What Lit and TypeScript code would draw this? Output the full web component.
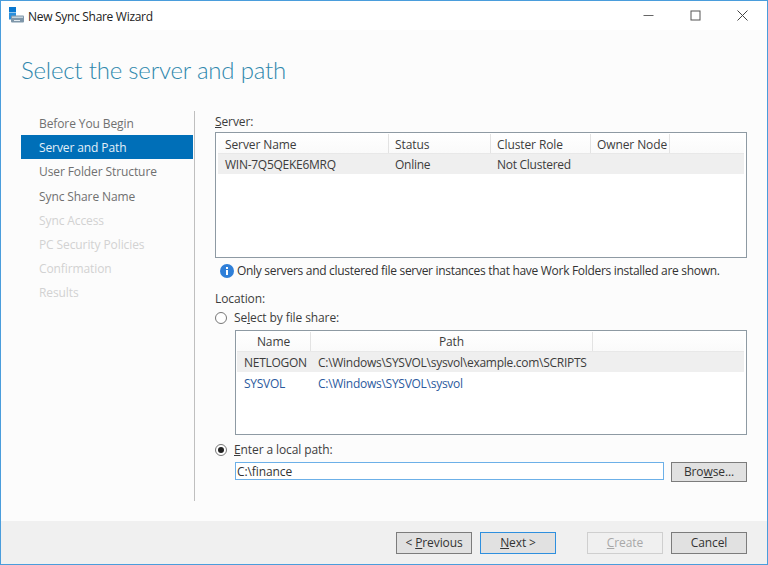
import { LitElement, html, css } from 'lit';
import { customElement } from 'lit/decorators.js';

const NAV = [
  { label: 'Before You Begin', cls: '' },
  { label: 'Server and Path', cls: 'active' },
  { label: 'User Folder Structure', cls: '' },
  { label: 'Sync Share Name', cls: '' },
  { label: 'Sync Access', cls: 'off' },
  { label: 'PC Security Policies', cls: 'off' },
  { label: 'Confirmation', cls: 'off' },
  { label: 'Results', cls: 'off' },
];

@customElement('app-root')
export class AppRoot extends LitElement {
  static styles = css`
    :host {
      display: block;
      width: 768px;
      height: 565px;
      font-family: 'Open Sans', 'Noto Sans', sans-serif;
      font-size: 12px;
      color: #3c3c3c;
      letter-spacing: -0.1px;
    }
    u { text-underline-offset: 1px; }
    .win {
      box-sizing: border-box;
      height: 565px;
      display: flex;
      flex-direction: column;
      border: 1px solid #4a9ddc;
      background: #fcfcfc;
    }
    .title {
      height: 29px;
      flex: none;
      display: flex;
      align-items: center;
      background: #fff;
      color: #222;
      letter-spacing: -0.3px;
    }
    .logo { margin-left: 7px; width: 17px; height: 17px; }
    .title span { margin-left: 3px; flex: 1; padding-top: 1px; }
    .ctl { width: 47px; height: 29px; display: flex; align-items: center; justify-content: center; }
    .ctl svg { width: 11px; height: 11px; }
    .ctl.last { margin-right: 1px; }
    h1 {
      margin: 22px 0 0 20px;
      height: 36px;
      font-family: 'Lato', 'Open Sans', sans-serif;
      font-size: 24px;
      line-height: 36px;
      font-weight: 300;
      letter-spacing: -0.2px;
      color: #2f88ad;
    }
    .main { flex: 1; display: flex; margin-top: 23px; }
    nav { width: 172px; margin-left: 20px; flex: none; height: 390px; }
    nav div { box-sizing: border-box; height: 24.2px; line-height: 24px; padding: 1px 0 0 18px; color: #707070; }
    nav .active { background: #006fb8; color: #e4f0f8; }
    nav .off { color: #d2d2d2; }
    .rule { width: 1px; height: 390px; margin-left: 1px; background: #bfbfbf; flex: none; }
    .content { margin-left: 20px; width: 532px; }
    .lbl { height: 17px; line-height: 17px; margin-top: 2px; }
    .list {
      box-sizing: border-box;
      border: 1px solid #8e9aa3;
      background: #fff;
      padding: 1px 2px;
    }
    .srv { height: 126px; margin-top: 2px; }
    .srv .head { line-height: 21px; }
    .shr { height: 105px; margin: 4px 0 0 20px; padding-left: 1px; }
    .head {
      display: flex;
      height: 19px;
      line-height: 19px;
      border-bottom: 1px solid #e8e8e8;
      background: linear-gradient(#fff, #fafafa);
    }
    .head div { border-right: 1px solid #e3e3e3; box-sizing: border-box; padding-left: 6px; flex: none; }
    .head .c { text-align: center; padding-left: 0; }
    .row { display: flex; height: 20px; line-height: 21px; letter-spacing: -0.27px; }
    .row div { box-sizing: border-box; padding-left: 6px; flex: none; white-space: nowrap; }
    .row.sel { background: #efefef; }
    .row.blue { color: #2b5a9e; height: 23px; line-height: 24px; }
    .info { display: flex; align-items: center; height: 17px; margin: 4px 0 0 5px; color: #333; letter-spacing: -0.3px; }
    .info svg { width: 14px; height: 14px; margin-right: 3px; flex: none; }
    .loc { margin-top: 11px; }
    .radio { display: flex; align-items: center; height: 17px; margin-top: 2px; }
    .dot {
      box-sizing: border-box;
      width: 12px; height: 12px;
      border: 1px solid #777;
      border-radius: 50%;
      background: #fff;
      margin-right: 7px;
      display: flex;
      align-items: center;
      justify-content: center;
      flex: none;
    }
    .dot i { width: 6px; height: 6px; border-radius: 50%; background: #222; }
    .radio.second { margin-top: 6px; }
    .pathrow { display: flex; margin: 4px 0 0 20px; align-items: flex-start; }
    .input {
      box-sizing: border-box;
      width: 429px; height: 18px;
      border: 1px solid #6cb0e8;
      background: #fff;
      line-height: 18px;
      padding-left: 1px;
      color: #333;
    }
    .btn {
      box-sizing: border-box;
      width: 76px; height: 20px;
      line-height: 18px;
      text-align: center;
      border: 1px solid #7c7c7c;
      background: #e1e1e1;
      color: #333;
    }
    .pathrow .btn { margin-left: 7px; }
    .btn.def { border-color: #2e8fde; }
    .btn.dis { border-color: #cfcfcf; background: #f0f0f0; color: #a8a8a8; }
    footer {
      height: 43px;
      flex: none;
      background: #f0f0f0;
      display: flex;
      align-items: flex-start;
      padding: 10px 20px 0 395px;
      box-sizing: border-box;
      gap: 8px;
    }
    footer .btn { height: 22px; line-height: 20px; margin-top: 1px; }
    footer .dis { margin-left: 23px; }
  `;

  render() {
    return html`
      <div class="win">
        <div class="title">
          <svg class="logo" viewBox="0 0 17 17">
            <rect x="1" y="0" width="7" height="5" fill="#0a78d0" />
            <rect x="1" y="5.5" width="7" height="7" fill="#2b8fdc" />
            <rect x="3" y="8.5" width="13" height="7" rx="1" fill="#7f97aa" />
            <rect x="4" y="9.5" width="11" height="1.5" fill="#c4d2dc" />
            <rect x="6" y="13" width="6" height="1" fill="#e6edf2" />
          </svg>
          <span>New Sync Share Wizard</span>
          <div class="ctl">
            <svg viewBox="0 0 11 11"><path d="M0.5 5.5h10" stroke="#666" fill="none" /></svg>
          </div>
          <div class="ctl">
            <svg viewBox="0 0 11 11"><rect x="1" y="1" width="9" height="9" stroke="#555" fill="none" /></svg>
          </div>
          <div class="ctl last">
            <svg viewBox="0 0 11 11"><path d="M0.5 0.5l10 10M10.5 0.5l-10 10" stroke="#444" fill="none" /></svg>
          </div>
        </div>
        <h1>Select the server and path</h1>
        <div class="main">
          <nav>${NAV.map((n) => html`<div class=${n.cls}>${n.label}</div>`)}</nav>
          <div class="rule"></div>
          <div class="content">
            <div class="lbl"><u>S</u>erver:</div>
            <div class="list srv">
              <div class="head">
                <div style="width:171px;padding-left:7px">Server Name</div>
                <div style="width:102px">Status</div>
                <div style="width:100px">Cluster Role</div>
                <div style="width:79px">Owner Node</div>
              </div>
              <div class="row sel">
                <div style="width:171px;padding-left:7px">WIN-7Q5QEKE6MRQ</div>
                <div style="width:102px">Online</div>
                <div style="width:100px">Not Clustered</div>
              </div>
            </div>
            <div class="info">
              <svg viewBox="0 0 14 14">
                <circle cx="7" cy="7" r="7" fill="#2f7fd8" />
                <rect x="6" y="6" width="2" height="5" fill="#fff" />
                <rect x="6" y="3" width="2" height="2" fill="#fff" />
              </svg>
              Only servers and clustered file server instances that have Work Folders installed are shown.
            </div>
            <div class="lbl loc">Location:</div>
            <div class="radio"><span class="dot"></span><span>Se<u>l</u>ect by file share:</span></div>
            <div class="list shr">
              <div class="head">
                <div class="c" style="width:74px">Name</div>
                <div class="c" style="width:282px">Path</div>
              </div>
              <div class="row sel">
                <div style="width:75px;padding-left:7px">NETLOGON</div>
                <div>C:\\Windows\\SYSVOL\\sysvol\\example.com\\SCRIPTS</div>
              </div>
              <div class="row blue">
                <div style="width:75px;padding-left:7px">SYSVOL</div>
                <div>C:\\Windows\\SYSVOL\\sysvol</div>
              </div>
            </div>
            <div class="radio second"><span class="dot"><i></i></span><span><u>E</u>nter a local path:</span></div>
            <div class="pathrow">
              <div class="input">C:\\finance</div>
              <div class="btn">Bro<u>w</u>se...</div>
            </div>
          </div>
        </div>
        <footer>
          <div class="btn">&lt; <u>P</u>revious</div>
          <div class="btn def"><u>N</u>ext &gt;</div>
          <div class="btn dis"><u>C</u>reate</div>
          <div class="btn">Cancel</div>
        </footer>
      </div>
    `;
  }
}
